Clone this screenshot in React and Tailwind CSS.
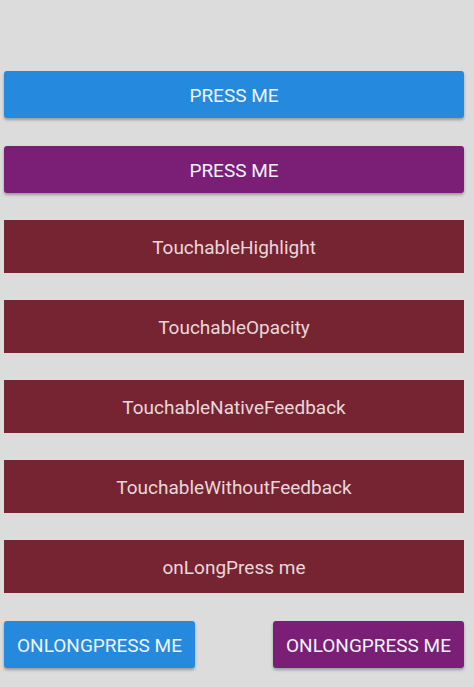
import React from 'react';

// Raised material-style button (blue / purple)
const RaisedButton = ({ label, color, className = '' }) => (
  <button
    className={`${color} ${className} h-[47px] pt-[4px] rounded-[3px] text-[19px] text-[#eef4fb] uppercase shadow-[0_2px_3px_rgba(0,0,0,0.3)]`}
    style={{ fontFamily: 'Roboto, "Liberation Sans", sans-serif' }}
  >
    {label}
  </button>
);

// Flat touchable block
const TouchBlock = ({ label }) => (
  <div
    className="h-[53px] pt-[3px] bg-[#762432] flex items-center justify-center text-[19px] text-[#ebd6da]"
    style={{ fontFamily: 'Roboto, "Liberation Sans", sans-serif' }}
  >
    {label}
  </div>
);

export default function App() {
  const touchables = [
    'TouchableHighlight',
    'TouchableOpacity',
    'TouchableNativeFeedback',
    'TouchableWithoutFeedback',
    'onLongPress me',
  ];

  return (
    <div className="w-[474px] h-[687px] bg-[#dcdcdc] overflow-hidden">
      <div className="w-[460px] ml-[4px] pt-[71px] flex flex-col">
        <RaisedButton label="Press me" color="bg-[#258ade]" />
        <RaisedButton label="Press me" color="bg-[#7b1f76]" className="mt-[28px]" />

        <div className="mt-[27px] flex flex-col gap-[27px]">
          {touchables.map(t => (
            <TouchBlock key={t} label={t} />
          ))}
        </div>

        <div className="mt-[28px] flex justify-between">
          <RaisedButton label="onLongPress me" color="bg-[#258ade]" className="w-[191px]" />
          <RaisedButton label="onLongPress me" color="bg-[#7b1f76]" className="w-[191px]" />
        </div>
      </div>
    </div>
  );
}
